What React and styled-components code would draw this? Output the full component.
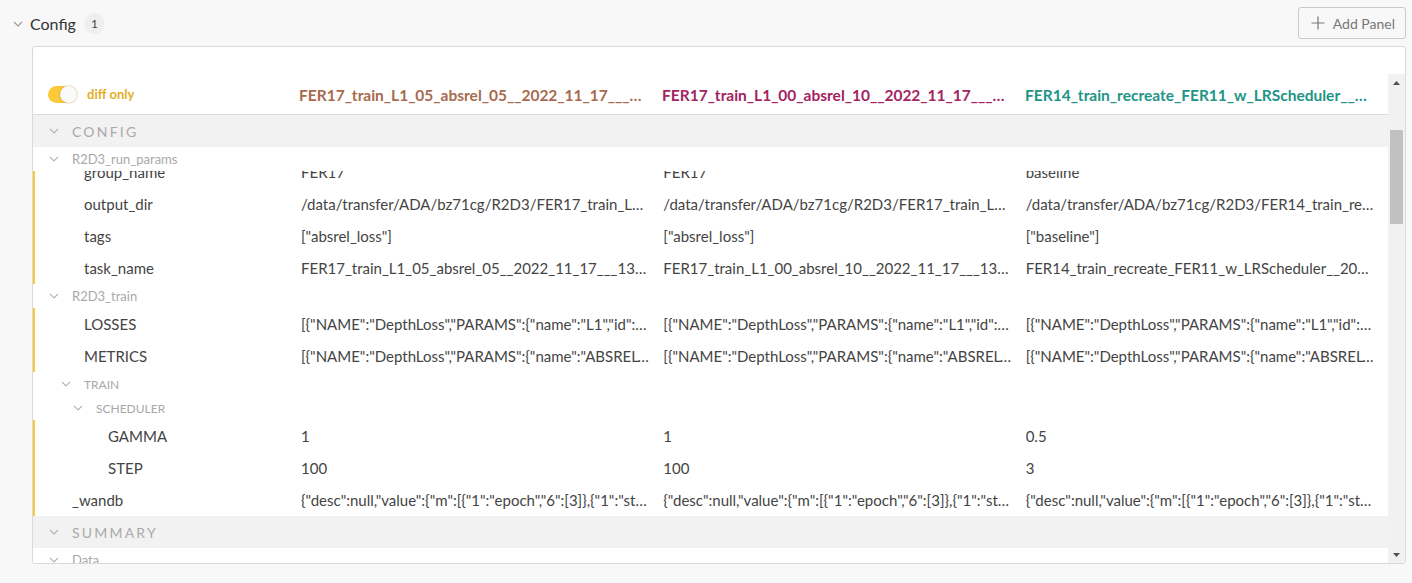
import React, { useLayoutEffect, useRef } from 'react';
import styled, { createGlobalStyle } from 'styled-components';

const GlobalStyle = createGlobalStyle`
  html, body {
    margin: 0;
    padding: 0;
    background: #f8f8f8;
    font-family: "Lato", "Noto Sans", sans-serif;
    color: #333;
  }
`;

const runs = [
  { name: 'FER17_train_L1_05_absrel_05__2022_11_17___13_05', color: '#a86a4e' },
  { name: 'FER17_train_L1_00_absrel_10__2022_11_17___13_05', color: '#a3245f' },
  { name: 'FER14_train_recreate_FER11_w_LRScheduler__2022_11_03', color: '#229485' },
];

const LOSS1 = '[{"NAME":"DepthLoss","PARAMS":{"name":"L1","id":0,"weight":0.5}}]';
const METR = '[{"NAME":"DepthLoss","PARAMS":{"name":"ABSREL","id":0}}]';
const WANDB = '{"desc":null,"value":{"m":[{"1":"epoch","6":[3]},{"1":"step","6":[3]}]}}';

// rows of the config section, in order; depth = nesting level
const configRows = [
  { type: 'key', depth: 1, key: 'entity_name', values: ['bz71cg', 'bz71cg', 'ada'], diff: true },
  { type: 'key', depth: 1, key: 'group_name', values: ['FER17', 'FER17', 'baseline'], diff: true },
  {
    type: 'key', depth: 1, key: 'output_dir', diff: true,
    values: [
      '/data/transfer/ADA/bz71cg/R2D3/FER17_train_L1_05_absrel_05__2022_11_17',
      '/data/transfer/ADA/bz71cg/R2D3/FER17_train_L1_00_absrel_10__2022_11_17',
      '/data/transfer/ADA/bz71cg/R2D3/FER14_train_recreate_FER11_w_LRScheduler',
    ],
  },
  { type: 'key', depth: 1, key: 'tags', values: ['["absrel_loss"]', '["absrel_loss"]', '["baseline"]'], diff: true },
  {
    type: 'key', depth: 1, key: 'task_name', diff: true,
    values: [
      'FER17_train_L1_05_absrel_05__2022_11_17___13_05',
      'FER17_train_L1_00_absrel_10__2022_11_17___13_05',
      'FER14_train_recreate_FER11_w_LRScheduler__2022_11_03',
    ],
  },
  { type: 'group', depth: 0, key: 'R2D3_train' },
  { type: 'key', depth: 1, key: 'LOSSES', values: [LOSS1, LOSS1, LOSS1], diff: true },
  { type: 'key', depth: 1, key: 'METRICS', values: [METR, METR, METR], diff: true },
  { type: 'group', depth: 1, key: 'TRAIN', caps: true },
  { type: 'group', depth: 2, key: 'SCHEDULER', caps: true },
  { type: 'key', depth: 3, key: 'GAMMA', values: ['1', '1', '0.5'], diff: true },
  { type: 'key', depth: 3, key: 'STEP', values: ['100', '100', '3'], diff: true },
  { type: 'key', depth: 0, key: '_wandb', values: [WANDB, WANDB, WANDB], diff: true },
];

const Chevron = ({ size = 12, color = '#b5b5b5' }) => (
  <svg width={size} height={size} viewBox="0 0 12 12" fill="none">
    <path d="M2 4l4 4 4-4" stroke={color} strokeWidth="1.1" />
  </svg>
);

const App = () => {
  const bodyRef = useRef(null);

  useLayoutEffect(() => {
    if (bodyRef.current) bodyRef.current.scrollTop = 47;
  }, []);

  return (
    <>
      <GlobalStyle />
      <Page>
        <TopBar>
          <Title>
            <Chevron size={12} color="#999" />
            <TitleText>Config</TitleText>
            <Count>1</Count>
          </Title>
          <AddButton>
            <svg width="14" height="14" viewBox="0 0 14 14">
              <path d="M7 0.5v13M0.5 7h13" stroke="#777" strokeWidth="1.2" />
            </svg>
            Add Panel
          </AddButton>
        </TopBar>
        <Panel>
          <PanelGap />
          <TableWrap>
            <Table>
              <HeaderRow>
                <KeyHead>
                  <Toggle>
                    <Knob />
                  </Toggle>
                  <DiffLabel>diff only</DiffLabel>
                </KeyHead>
                {runs.map((r) => (
                  <RunHead key={r.name} $color={r.color}>{r.name}</RunHead>
                ))}
              </HeaderRow>
              <Body ref={bodyRef}>
                <Section>
                  <SectionRow>
                    <Chevron />
                    <SectionText>CONFIG</SectionText>
                  </SectionRow>
                  <Group>
                    <GroupRow $depth={0} $sticky>
                      <Chevron />
                      <GroupText>R2D3_run_params</GroupText>
                    </GroupRow>
                    {configRows.map((row, i) =>
                      row.type === 'group' ? (
                        <GroupRow key={i} $depth={row.depth}>
                          <Chevron />
                          <GroupText $caps={row.caps}>{row.key}</GroupText>
                        </GroupRow>
                      ) : (
                        <KeyRow key={i} $diff={row.diff}>
                          <KeyCell $depth={row.depth}>{row.key}</KeyCell>
                          {row.values.map((v, j) => (
                            <ValueCell key={j}>{v}</ValueCell>
                          ))}
                        </KeyRow>
                      )
                    )}
                  </Group>
                </Section>
                <Section>
                  <SectionRow>
                    <Chevron />
                    <SectionText>SUMMARY</SectionText>
                  </SectionRow>
                  <GroupRow $depth={0}>
                    <Chevron />
                    <GroupText>Data</GroupText>
                  </GroupRow>
                  <KeyRow>
                    <KeyCell $depth={1}>epoch</KeyCell>
                    <ValueCell>49</ValueCell>
                    <ValueCell>49</ValueCell>
                    <ValueCell>29</ValueCell>
                  </KeyRow>
                </Section>
              </Body>
            </Table>
            <ScrollBar>
              <ArrowBox>
                <svg width="7" height="4" viewBox="0 0 7 4"><path d="M0 4L3.5 0L7 4Z" fill="#505050" /></svg>
              </ArrowBox>
              <Track>
                <Thumb />
              </Track>
              <ArrowBox>
                <svg width="7" height="4" viewBox="0 0 7 4"><path d="M0 0L3.5 4L7 0Z" fill="#505050" /></svg>
              </ArrowBox>
            </ScrollBar>
          </TableWrap>
        </Panel>
      </Page>
    </>
  );
};

const Page = styled.div`
  width: 1412px;
  height: 583px;
  box-sizing: border-box;
  padding: 7px 6px 0 12px;
  display: flex;
  flex-direction: column;
`;

const TopBar = styled.div`
  display: flex;
  align-items: center;
  justify-content: space-between;
  height: 32px;
  margin-bottom: 7px;
`;

const Title = styled.div`
  display: flex;
  align-items: center;
  gap: 7px;
  padding-top: 1px;
`;

const TitleText = styled.span`
  font-size: 16px;
  color: #333;
  margin-left: -1px;
`;

const Count = styled.span`
  display: inline-flex;
  align-items: center;
  justify-content: center;
  width: 21px;
  height: 21px;
  border-radius: 50%;
  background: #efefef;
  font-size: 12px;
  color: #444;
  margin-left: 1px;
`;

const AddButton = styled.button`
  display: flex;
  align-items: center;
  gap: 8px;
  height: 32px;
  padding: 0 10px 0 12px;
  background: #f8f8f8;
  border: 1px solid #c9c9c9;
  border-radius: 3px;
  font-family: "Lato", "Noto Sans", sans-serif;
  font-size: 14px;
  color: #777;
`;

const Panel = styled.div`
  margin-left: 20px;
  height: 518px;
  box-sizing: border-box;
  background: #fff;
  border: 1px solid #dadada;
  border-radius: 3px;
  display: flex;
  flex-direction: column;
  overflow: hidden;
`;

const PanelGap = styled.div`
  height: 27px;
  flex: none;
`;

const TableWrap = styled.div`
  flex: 1;
  min-height: 0;
  display: flex;
`;

const Table = styled.div`
  flex: 1;
  min-width: 0;
  display: flex;
  flex-direction: column;
`;

const HeaderRow = styled.div`
  display: grid;
  grid-template-columns: 266px 1fr 1fr 1fr;
  height: 41px;
  flex: none;
  align-items: center;
  border-bottom: 1px solid #dcdcdc;
  box-sizing: border-box;
`;

const KeyHead = styled.div`
  display: flex;
  align-items: center;
  padding-left: 15px;
  gap: 10px;
`;

const Toggle = styled.div`
  width: 29px;
  height: 17px;
  border-radius: 9px;
  background: #fcc93a;
  position: relative;
`;

const Knob = styled.div`
  position: absolute;
  right: 0;
  top: 0;
  width: 17px;
  height: 17px;
  border-radius: 50%;
  background: #fafafa;
  box-shadow: 0 0 1px 1px rgba(0, 0, 0, 0.1);
`;

const DiffLabel = styled.span`
  font-size: 13px;
  font-weight: 700;
  color: #e4ad25;
`;

const RunHead = styled.div`
  font-size: 15.5px;
  font-weight: 700;
  color: ${(p) => p.$color};
  white-space: nowrap;
  overflow: hidden;
  text-overflow: ellipsis;
  padding-right: 16px;
  padding-top: 2px;
`;

const Body = styled.div`
  flex: 1;
  min-height: 0;
  overflow-y: scroll;
  scrollbar-width: none;
  &::-webkit-scrollbar {
    display: none;
  }
`;

const Section = styled.div``;

const SectionRow = styled.div`
  position: sticky;
  top: 0;
  z-index: 3;
  display: flex;
  align-items: center;
  gap: 12px;
  height: 32px;
  padding-left: 15px;
  background: #f2f2f2;
`;

const SectionText = styled.span`
  font-size: 14px;
  letter-spacing: 2.2px;
  color: #aaa;
`;

const Group = styled.div``;

const GroupRow = styled.div`
  display: flex;
  align-items: center;
  gap: 12px;
  height: 24px;
  padding-left: ${(p) => 15 + p.$depth * 12}px;
  background: #fff;
  ${(p) => p.$sticky && 'position: sticky; top: 32px; z-index: 2;'}
`;

const GroupText = styled.span`
  font-size: ${(p) => (p.$caps ? '12px' : '13px')};
  color: #a8a8a8;
`;

const KeyRow = styled.div`
  display: grid;
  grid-template-columns: 266px 1fr 1fr 1fr;
  align-items: center;
  height: 32px;
  border-left: 2px solid ${(p) => (p.$diff ? '#fcc93a' : 'transparent')};
  font-size: 15px;
`;

const KeyCell = styled.div`
  padding-left: ${(p) => 37 + p.$depth * 12}px;
  color: #444;
  white-space: nowrap;
`;

const ValueCell = styled.div`
  color: #444;
  white-space: nowrap;
  overflow: hidden;
  text-overflow: ellipsis;
  padding-right: 14px;
`;

const ScrollBar = styled.div`
  width: 17px;
  flex: none;
  background: #f1f1f1;
  display: flex;
  flex-direction: column;
`;

const ArrowBox = styled.div`
  height: 17px;
  display: flex;
  align-items: center;
  justify-content: center;
  flex: none;
`;

const Track = styled.div`
  flex: 1;
  padding: 39px 2px 0;
`;

const Thumb = styled.div`
  height: 94px;
  background: #c1c1c1;
`;

export default App;
